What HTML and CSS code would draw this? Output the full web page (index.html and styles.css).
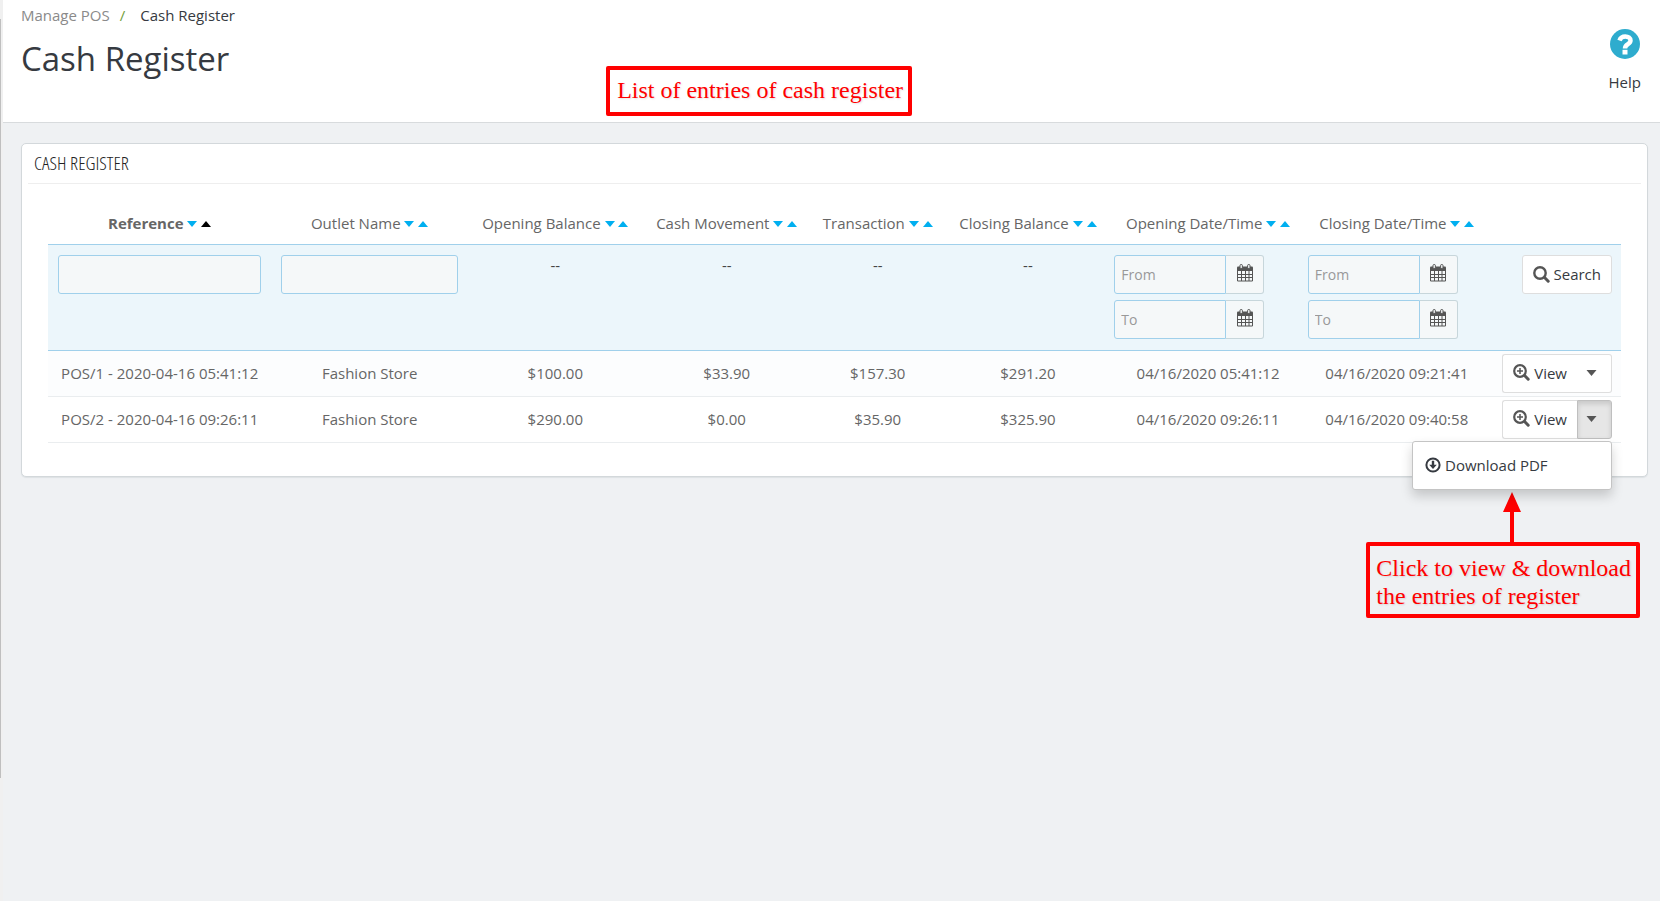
FILE: index.html
```html
<!DOCTYPE html>
<html lang="en">
<head>
    <meta charset="UTF-8">
    <meta name="viewport" content="width=device-width, initial-scale=1.0">
    <title>Cash Register</title>
    <link rel="stylesheet" href="styles.css">
</head>
<body>

    <!-- shared icons -->
    <svg class="sprite" aria-hidden="true">
        <symbol id="icon-down" viewBox="0 0 10 6"><path d="M0 0h10L5 6z"/></symbol>
        <symbol id="icon-up" viewBox="0 0 10 6"><path d="M0 6h10L5 0z"/></symbol>
        <symbol id="icon-calendar" viewBox="0 0 18 18">
            <path fill="none" stroke="currentColor" d="M1.5 7v10h15V7M5.5 7v10M9.5 7v10M13 7v10M1 10.5h16M1 13.5h16"/>
            <path d="M1 3.500q0-1 1-1h14q1 0 1 1V7H1z"/>
            <path fill="#f5f8f9" stroke="currentColor" d="M4 1.500q0-1 1.200-1t1.200 1v2q0 1-1.200 1t-1.200-1zM11.600 1.500q0-1 1.200-1t1.200 1v2q0 1-1.200 1t-1.200-1z"/>
        </symbol>
        <symbol id="icon-search" viewBox="0 0 17 17">
            <circle cx="7" cy="7" r="5.700" fill="none" stroke="currentColor" stroke-width="2.400"/>
            <path fill="none" stroke="currentColor" stroke-width="3" stroke-linecap="round" d="M11.800 11.800l3.400 3.400"/>
        </symbol>
        <symbol id="icon-zoom" viewBox="0 0 17 17">
            <circle cx="7" cy="7" r="5.800" fill="none" stroke="currentColor" stroke-width="2.200"/>
            <path fill="none" stroke="currentColor" stroke-width="3" stroke-linecap="round" d="M11.800 11.800l3.400 3.400"/>
            <path fill="none" stroke="currentColor" stroke-width="1.500" d="M7 4v6M4 7h6"/>
        </symbol>
        <symbol id="icon-download" viewBox="0 0 16 16">
            <circle cx="8" cy="8" r="6.600" fill="none" stroke="currentColor" stroke-width="2"/>
            <path d="M6.800 3.800h2.400v4h2.600L8 12 4.200 7.800h2.600z"/>
        </symbol>
        <symbol id="icon-help" viewBox="0 0 30 30">
            <circle cx="15" cy="15" r="15"/>
            <path fill="none" stroke="#fff" stroke-width="4.500" d="M9.500 11.500C10.500 8.500 12.500 7.500 15.300 7.500c3 0 5.200 1.600 5.200 4 0 4-5.500 3.200-5.500 8"/>
            <path fill="#fff" d="M12.500 20.800h5v4.700h-5z"/>
        </symbol>
    </svg>

    <div class="page">
        <header class="page-head">
            <div>
                <ul class="breadcrumb">
                    <li><a href="#">Manage POS</a></li>
                    <li>Cash Register</li>
                </ul>
                <h1>Cash Register</h1>
            </div>
            <a class="help" href="#">
                <svg><use href="#icon-help"/></svg>
                Help
            </a>
            <p class="note note-list">List of entries of cash register</p>
        </header>

        <main class="panel">
            <h2 class="panel-heading">Cash Register</h2>

            <table class="table">
                <colgroup>
                    <col class="col-reference">
                    <col class="col-outlet">
                    <col class="col-opening">
                    <col class="col-movement">
                    <col class="col-transaction">
                    <col class="col-closing">
                    <col class="col-opened">
                    <col class="col-closed">
                    <col>
                </colgroup>
                <thead>
                    <tr class="titles">
                        <th class="active">Reference
                            <a href="#" aria-label="Sort descending"><svg><use href="#icon-down"/></svg></a>
                            <a href="#" class="current" aria-label="Sort ascending"><svg><use href="#icon-up"/></svg></a></th>
                        <th>Outlet Name
                            <a href="#" aria-label="Sort descending"><svg><use href="#icon-down"/></svg></a>
                            <a href="#" aria-label="Sort ascending"><svg><use href="#icon-up"/></svg></a></th>
                        <th>Opening Balance
                            <a href="#" aria-label="Sort descending"><svg><use href="#icon-down"/></svg></a>
                            <a href="#" aria-label="Sort ascending"><svg><use href="#icon-up"/></svg></a></th>
                        <th>Cash Movement
                            <a href="#" aria-label="Sort descending"><svg><use href="#icon-down"/></svg></a>
                            <a href="#" aria-label="Sort ascending"><svg><use href="#icon-up"/></svg></a></th>
                        <th>Transaction
                            <a href="#" aria-label="Sort descending"><svg><use href="#icon-down"/></svg></a>
                            <a href="#" aria-label="Sort ascending"><svg><use href="#icon-up"/></svg></a></th>
                        <th>Closing Balance
                            <a href="#" aria-label="Sort descending"><svg><use href="#icon-down"/></svg></a>
                            <a href="#" aria-label="Sort ascending"><svg><use href="#icon-up"/></svg></a></th>
                        <th>Opening Date/Time
                            <a href="#" aria-label="Sort descending"><svg><use href="#icon-down"/></svg></a>
                            <a href="#" aria-label="Sort ascending"><svg><use href="#icon-up"/></svg></a></th>
                        <th>Closing Date/Time
                            <a href="#" aria-label="Sort descending"><svg><use href="#icon-down"/></svg></a>
                            <a href="#" aria-label="Sort ascending"><svg><use href="#icon-up"/></svg></a></th>
                        <td></td>
                    </tr>
                    <tr class="filters">
                        <td><input type="text" class="field" aria-label="Reference"></td>
                        <td><input type="text" class="field" aria-label="Outlet Name"></td>
                        <td>--</td>
                        <td>--</td>
                        <td>--</td>
                        <td>--</td>
                        <td class="dates">
                            <div class="date-group">
                                <input type="text" class="field" placeholder="From" aria-label="Opening from">
                                <span class="addon"><svg><use href="#icon-calendar"/></svg></span>
                            </div>
                            <div class="date-group">
                                <input type="text" class="field" placeholder="To" aria-label="Opening to">
                                <span class="addon"><svg><use href="#icon-calendar"/></svg></span>
                            </div>
                        </td>
                        <td class="dates">
                            <div class="date-group">
                                <input type="text" class="field" placeholder="From" aria-label="Closing from">
                                <span class="addon"><svg><use href="#icon-calendar"/></svg></span>
                            </div>
                            <div class="date-group">
                                <input type="text" class="field" placeholder="To" aria-label="Closing to">
                                <span class="addon"><svg><use href="#icon-calendar"/></svg></span>
                            </div>
                        </td>
                        <td class="actions">
                            <button type="button" class="btn"><svg><use href="#icon-search"/></svg>Search</button>
                        </td>
                    </tr>
                </thead>
                <tbody>
                    <tr class="odd">
                        <td>POS/1 - 2020-04-16 05:41:12</td>
                        <td>Fashion Store</td>
                        <td>$100.00</td>
                        <td>$33.90</td>
                        <td>$157.30</td>
                        <td>$291.20</td>
                        <td>04/16/2020 05:41:12</td>
                        <td>04/16/2020 09:21:41</td>
                        <td class="actions">
                            <div class="btn-group">
                                <button type="button" class="btn btn-view"><svg><use href="#icon-zoom"/></svg>View</button>
                                <button type="button" class="btn btn-toggle" aria-label="More actions"><svg><use href="#icon-down"/></svg></button>
                            </div>
                        </td>
                    </tr>
                    <tr>
                        <td>POS/2 - 2020-04-16 09:26:11</td>
                        <td>Fashion Store</td>
                        <td>$290.00</td>
                        <td>$0.00</td>
                        <td>$35.90</td>
                        <td>$325.90</td>
                        <td>04/16/2020 09:26:11</td>
                        <td>04/16/2020 09:40:58</td>
                        <td class="actions">
                            <div class="btn-group">
                                <button type="button" class="btn btn-view"><svg><use href="#icon-zoom"/></svg>View</button>
                                <button type="button" class="btn btn-toggle open" aria-label="More actions"><svg><use href="#icon-down"/></svg></button>
                                <div class="dropdown">
                                    <a href="#"><svg><use href="#icon-download"/></svg>Download PDF</a>
                                </div>
                            </div>
                        </td>
                    </tr>
                </tbody>
            </table>

            <div class="callout">
                <svg class="arrow" viewBox="0 0 18 50"><path d="M9 0l9 20h-7v30H7V20H0z"/></svg>
                <p class="note">Click to view &amp; download<br>the entries of register</p>
            </div>
        </main>
    </div>

</body>
</html>
```

FILE: styles.css
```css
* {
    box-sizing: border-box;
}
body {
    margin: 0;
    background: #eff1f3;
    color: #666;
    font: 15px/20px "Open Sans", sans-serif;
}
a {
    color: inherit;
    text-decoration: none;
}
svg {
    fill: currentColor;
}
.sprite {
    display: none;
}

/* bottom edge of the side menu */
body::before {
    content: "";
    position: absolute;
    top: 19px;
    left: 0;
    width: 1px;
    height: 759px;
    background: #bfbfbf;
}
.page {
    border-left: 3px solid #f0f0f0;
    min-height: 100vh;
}

/* header */
.page-head {
    position: relative;
    display: flex;
    justify-content: space-between;
    height: 123px;
    padding: 5px 19px 0 18px;
    background: #fff;
    border-bottom: 1px solid #d8dbdd;
}
.breadcrumb {
    display: flex;
    margin: 0;
    padding: 0;
    list-style: none;
    color: #363a41;
}
.breadcrumb a {
    color: #8a8a8a;
}
.breadcrumb li + li::before {
    content: "/";
    padding: 0 15px 0 10px;
    color: #72a03c;
}
h1 {
    margin: 13px 0 0;
    color: #363a41;
    font-size: 33px;
    line-height: 42px;
    font-weight: 400;
}
.help {
    display: flex;
    flex-direction: column;
    align-items: center;
    gap: 13px;
    padding-top: 24px;
    color: #363a41;
}
.help svg {
    width: 30px;
    height: 30px;
    color: #2eacce;
}

/* panel */
.panel {
    position: relative;
    margin: 20px 12px 0 18px;
    padding: 0 6px 33px;
    background: #fff;
    border: 1px solid #d3d8db;
    border-radius: 5px;
    box-shadow: 0 1px 1px #dde1e4;
}
.panel-heading {
    margin: 0;
    padding: 0 6px 1px;
    color: #222;
    border-bottom: 1px solid #eee;
    font-family: "Ubuntu Condensed", "Open Sans Condensed Light", "Open Sans Condensed", "Open Sans", sans-serif;
    font-size: 19px;
    line-height: 38px;
    font-weight: 400;
    text-transform: uppercase;
}
.table {
    width: calc(100% - 40px);
    margin: 17px 20px 0;
    border-collapse: separate;
    border-spacing: 0;
    table-layout: fixed;
    text-align: center;
}
.col-reference { width: 14.2%; }
.col-outlet { width: 12.5%; }
.col-opening { width: 11.1%; }
.col-movement { width: 10.7%; }
.col-transaction { width: 8.5%; }
.col-closing { width: 10.6%; }
.col-opened { width: 12.3%; }
.col-closed { width: 11.7%; }

th, td {
    height: 46px;
    padding: 0 0 1px;
    border-bottom: 1px solid #eaedef;
    white-space: nowrap;
}
th {
    font-weight: 400;
}
.titles th, .titles td {
    height: 44px;
    padding: 0;
    border-bottom-color: #a0d0eb;
}
.titles .active {
    font-weight: 700;
}
.titles a {
    color: #00aff0;
}
.titles .current {
    color: #000;
}
.titles svg {
    width: 10px;
    height: 6px;
    vertical-align: 2px;
}
.filters td {
    height: 106px;
    padding: 10px;
    background: #ecf6fb;
    border-bottom-color: #a0d0eb;
    color: #444;
    vertical-align: top;
}
.filters td.dates {
    padding: 10px 3px;
}
.odd td {
    background: #fcfdfe;
}
td.actions, .filters td.actions {
    padding-right: 9px;
    text-align: right;
}

/* form controls */
.field {
    display: block;
    width: 100%;
    height: 39px;
    padding: 0 6px;
    background: #f5f8f9;
    border: 1px solid #a0d0eb;
    border-radius: 3px;
    color: #555;
    font: inherit;
    font-size: 14px;
}
.field::placeholder {
    color: #999;
}
.date-group {
    display: flex;
    width: 150px;
}
.date-group + .date-group {
    margin-top: 6px;
}
.date-group .field {
    flex: 1;
    min-width: 0;
    border-radius: 3px 0 0 3px;
}
.addon {
    display: flex;
    align-items: center;
    justify-content: center;
    width: 38px;
    padding-bottom: 3px;
    background: #f5f8f9;
    border: 1px solid #c7d6db;
    border-left: 0;
    border-radius: 0 3px 3px 0;
    color: #555;
}
.addon svg {
    width: 18px;
    height: 18px;
}
.btn {
    display: inline-flex;
    align-items: center;
    gap: 4px;
    height: 39px;
    padding: 0 10px 1px;
    background: #fff;
    border: 1px solid #dedede;
    border-radius: 3px;
    color: #363a41;
    font: inherit;
}
.btn svg {
    width: 17px;
    height: 17px;
    color: #555;
}
.btn-group {
    position: relative;
    display: inline-flex;
    vertical-align: middle;
}
.btn-view {
    border-right: 0;
    border-radius: 3px 0 0 3px;
}
.btn-toggle {
    justify-content: center;
    width: 35px;
    padding: 0 6px 1px 0;
    border-left: 0;
    border-radius: 0 3px 3px 0;
}
.btn-toggle svg {
    width: 11px;
    height: 6px;
}
.btn-toggle.open {
    background: #e6e6e6;
    border: 1px solid #bfbfbf;
    box-shadow: inset 0 3px 5px rgba(0, 0, 0, 0.13);
}
.dropdown {
    position: absolute;
    top: 100%;
    right: 0;
    z-index: 2;
    width: 200px;
    margin-top: 2px;
    padding: 8px 0 9px;
    background: #fff;
    border: 1px solid #c4c4c4;
    border-radius: 3px;
    box-shadow: 0 6px 12px rgba(0, 0, 0, 0.18);
    text-align: left;
}
.dropdown a {
    display: flex;
    align-items: center;
    gap: 4px;
    padding: 5px 12px;
    color: #363a41;
}
.dropdown svg {
    width: 16px;
    height: 16px;
}

/* red notes on top of the page */
.note {
    margin: 0;
    padding: 8px 5px 4px 6px;
    border: 4px solid #f00;
    border-radius: 2px;
    color: #f00;
    font: 24px/28px "Liberation Serif", serif;
    text-shadow: 1px 1px 2px rgba(0, 0, 0, 0.12);
    white-space: nowrap;
}
.note-list {
    position: absolute;
    top: 66px;
    left: 36.4%;
    padding: 6px 5px 8px 7px;
}
.callout {
    position: absolute;
    top: 348px;
    right: 7px;
}
.arrow {
    display: block;
    width: 18px;
    height: 50px;
    margin-left: 137px;
    color: #f00;
}
```
